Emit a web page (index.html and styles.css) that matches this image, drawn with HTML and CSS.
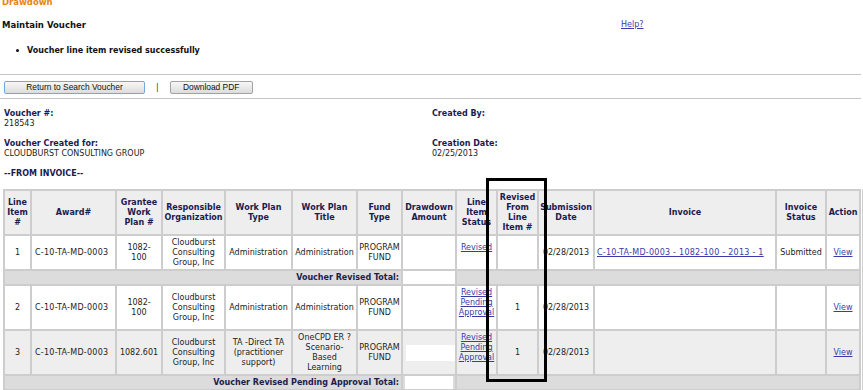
FILE: index.html
```html
<!DOCTYPE html>
<html lang="en">
<head>
<meta charset="utf-8">
<title>Maintain Voucher</title>
<link rel="stylesheet" href="styles.css">
</head>
<body>
<div class="page">
  <div class="section-title">Drawdown</div>
  <div class="title-row">
    <h2 class="page-title">Maintain Voucher</h2>
    <a class="link help" href="#">Help?</a>
  </div>
  <ul class="messages">
    <li>Voucher line item revised successfully</li>
  </ul>
  <div class="toolbar">
    <button class="btn btn-primary" type="button">Return to Search Voucher</button>
    <span class="sep">|</span>
    <button class="btn btn-pdf" type="button">Download PDF</button>
  </div>
  <div class="info">
    <div class="field"><div class="label">Voucher #:</div><div class="value">218543</div></div>
    <div class="field"><div class="label">Created By:</div><div class="value"></div></div>
    <div class="field"><div class="label">Voucher Created for:</div><div class="value">CLOUDBURST CONSULTING GROUP</div></div>
    <div class="field"><div class="label">Creation Date:</div><div class="value">02/25/2013</div></div>
  </div>
  <div class="from-invoice">--FROM INVOICE--</div>
  <div class="table-wrap">
    <table class="grid">
      <colgroup>
        <col class="c-line"><col class="c-award"><col class="c-plan"><col class="c-org"><col class="c-type"><col class="c-title"><col class="c-fund"><col class="c-amount"><col class="c-status"><col class="c-from"><col class="c-date"><col class="c-invoice"><col class="c-istatus"><col class="c-action">
      </colgroup>
      <thead>
        <tr>
          <th>Line Item #</th>
          <th>Award#</th>
          <th>Grantee Work Plan #</th>
          <th>Responsible Organization</th>
          <th>Work Plan Type</th>
          <th>Work Plan Title</th>
          <th>Fund Type</th>
          <th>Drawdown Amount</th>
          <th>Line Item Status</th>
          <th>Revised From Line Item #</th>
          <th>Submission Date</th>
          <th>Invoice</th>
          <th>Invoice Status</th>
          <th>Action</th>
        </tr>
      </thead>
      <tbody>
        <tr>
          <td>1</td>
          <td class="left code">C-10-TA-MD-0003</td>
          <td>1082-<br>100</td>
          <td>Cloudburst Consulting Group, Inc</td>
          <td>Administration</td>
          <td>Administration</td>
          <td>PROGRAM FUND</td>
          <td class="amount"></td>
          <td class="status"><a class="link" href="#">Revised</a></td>
          <td></td>
          <td>02/28/2013</td>
          <td class="left invoice"><a class="link code" href="#">C-10-TA-MD-0003 - 1082-100 - 2013 - 1</a></td>
          <td>Submitted</td>
          <td><a class="link" href="#">View</a></td>
        </tr>
        <tr class="total">
          <td colspan="7" class="total-label">Voucher Revised Total:</td>
          <td class="amount-total"></td>
          <td colspan="6"></td>
        </tr>
        <tr>
          <td>2</td>
          <td class="left code">C-10-TA-MD-0003</td>
          <td>1082-<br>100</td>
          <td>Cloudburst Consulting Group, Inc</td>
          <td>Administration</td>
          <td>Administration</td>
          <td>PROGRAM FUND</td>
          <td class="amount"></td>
          <td class="status"><a class="link" href="#">Revised Pending Approval</a></td>
          <td>1</td>
          <td>02/28/2013</td>
          <td class="left invoice"></td>
          <td></td>
          <td><a class="link" href="#">View</a></td>
        </tr>
        <tr class="alt">
          <td>3</td>
          <td class="left code">C-10-TA-MD-0003</td>
          <td>1082.601</td>
          <td>Cloudburst Consulting Group, Inc</td>
          <td>TA -Direct TA (practitioner support)</td>
          <td>OneCPD ER ? Scenario-Based Learning</td>
          <td>PROGRAM FUND</td>
          <td class="amount"><span class="redact"></span></td>
          <td class="status"><a class="link" href="#">Revised Pending Approval</a></td>
          <td>1</td>
          <td>02/28/2013</td>
          <td class="left invoice"></td>
          <td></td>
          <td><a class="link" href="#">View</a></td>
        </tr>
        <tr class="total">
          <td colspan="7" class="total-label">Voucher Revised Pending Approval Total:</td>
          <td class="amount-total inset"></td>
          <td colspan="6"></td>
        </tr>
      </tbody>
    </table>
  </div>
  <div class="annotation"></div>
</div>
</body>
</html>
```
FILE: styles.css
```css
html {
  overflow: hidden;
}

body {
  margin: 0;
  background: #fff;
  color: #222;
  font-family: "DejaVu Sans", Verdana, sans-serif;
  font-size: 8px;
  line-height: 10px;
}

.page {
  position: relative;
  display: flow-root;
}

.link {
  color: #3b3ba8;
  text-decoration: underline;
}

.section-title {
  margin: -3.5px 0 0 2px;
  font-size: 8.5px;
  font-weight: bold;
  color: #e5850f;
}

.title-row {
  display: grid;
  grid-template-columns: 619px auto;
  margin-top: 13px;
  padding-left: 2px;
}

.page-title {
  margin: 0;
  font-size: 8.5px;
  line-height: 10px;
  font-weight: bold;
  color: #111;
}

.help {
  justify-self: start;
}

.messages {
  list-style: none;
  margin: 16.2px 0 0;
  padding: 0;
}

.messages li {
  display: flex;
  align-items: center;
  font-weight: bold;
  color: #111;
}

.messages li::before {
  content: "";
  width: 3px;
  height: 3px;
  border-radius: 50%;
  background: #111;
  margin: 0 8px 0 16px;
}

.toolbar {
  box-sizing: border-box;
  display: flex;
  align-items: center;
  gap: 11px;
  width: 861px;
  margin-top: 18.3px;
  padding: 6px 0 4px 4px;
  border-top: 1px solid #c6c6c6;
  border-bottom: 1px solid #c6c6c6;
}

.btn {
  box-sizing: border-box;
  height: 13px;
  margin: 0;
  padding: 0;
  border: 1px solid #a2a2a2;
  border-radius: 2px;
  background: linear-gradient(#f7f7f7, #dcdcdc);
  color: #111;
  font-family: "Liberation Sans", Arial, sans-serif;
  font-size: 8.4px;
  line-height: 11px;
}

.btn-primary {
  width: 141px;
  border-color: #72a8dc;
}

.btn-pdf {
  width: 83px;
}

.sep {
  color: #333;
  padding-top: 2px;
}

.info {
  display: grid;
  grid-template-columns: 428px 1fr;
  row-gap: 10px;
  margin-top: 9.7px;
  padding-left: 4px;
}

.label {
  font-weight: bold;
  color: #1b1b4f;
}

.value {
  min-height: 10px;
  color: #222;
}

.from-invoice {
  margin-top: 10.5px;
  padding-left: 4px;
  font-weight: bold;
  color: #1b1b4f;
}

.table-wrap {
  width: 859px;
  margin: 9.8px 0 0 3px;
  border-right: 1px solid #d0d0d0;
}

.grid {
  width: 858px;
  table-layout: fixed;
  border-collapse: collapse;
}

.c-line { width: 27px; }
.c-award { width: 85px; }
.c-plan { width: 46px; }
.c-org { width: 63px; }
.c-type { width: 67px; }
.c-title { width: 65px; }
.c-fund { width: 45px; }
.c-amount { width: 54px; }
.c-status { width: 41px; }
.c-from { width: 41px; }
.c-date { width: 56px; }
.c-invoice { width: 182px; }
.c-istatus { width: 50px; }
.c-action { width: 34px; }

.grid th,
.grid td {
  border: 2px solid #cdcdcd;
  padding: 2px 1px 1px;
  text-align: center;
  vertical-align: middle;
  line-height: 10px;
  font-size: 8px;
  background: #fff;
}

.grid th {
  background: #eeeeee;
  color: #1b1b4f;
  font-weight: bold;
}

.grid td.left {
  text-align: left;
  padding-left: 2px;
}

.grid td.code {
  padding-left: 3px;
}

.code {
  letter-spacing: 0.25px;
}

.grid td.status {
  padding-bottom: 11px;
}

.grid td.amount {
  text-align: right;
  padding-right: 0;
}

.redact {
  display: inline-block;
  width: 49px;
  height: 16px;
  background: #fff;
  vertical-align: middle;
}

.grid tr.alt td {
  background: #eeeeee;
}

.grid tr.total td {
  background: #dcdcdc;
  font-weight: bold;
  color: #1b1b4f;
}

.grid tr.total td.total-label {
  text-align: right;
  padding-right: 2px;
}

.grid tr.total td.amount-total {
  background: #fff;
}

.grid tr.total td.inset {
  box-shadow: inset 2px 0 0 #dcdcdc, inset -2px 0 0 #dcdcdc;
}

.annotation {
  position: absolute;
  left: 486px;
  top: 178px;
  box-sizing: border-box;
  width: 61px;
  height: 204px;
  border: 3px solid #000;
}
```
